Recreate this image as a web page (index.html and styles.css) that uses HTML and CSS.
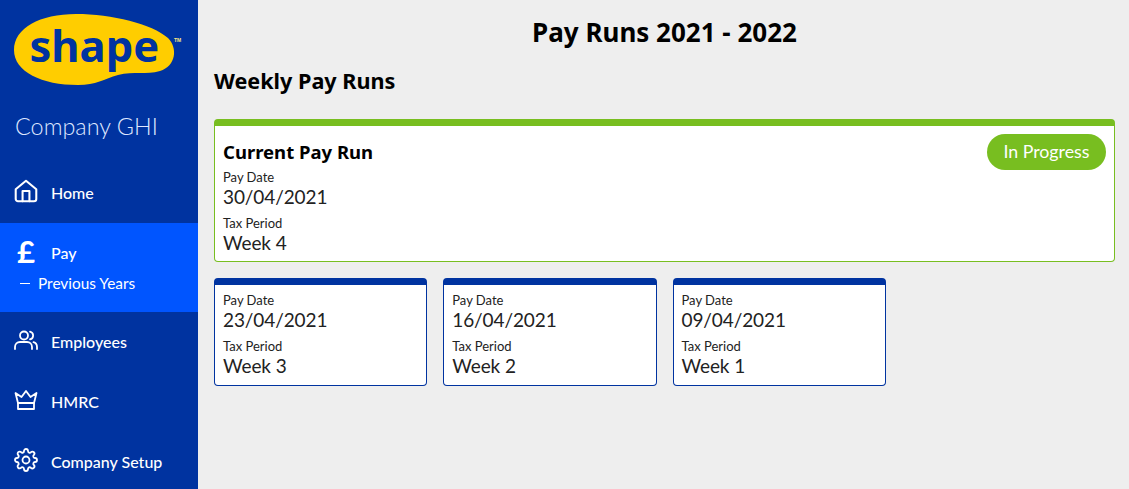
FILE: index.html
```html
<!DOCTYPE html>
<html lang="en">
<head>
<meta charset="utf-8">
<title>Pay Runs</title>
<link rel="stylesheet" href="styles.css">
</head>
<body>
<div class="app">
  <aside class="sidebar">
    <div class="logo">
      <svg class="logo-svg" width="198" height="96" viewBox="0 0 198 96">
        <path class="blob" d="M14 50C14 28 40 14 76 14C112 14 152 24 168 38C178 48 176 66 160 71C146 75 134 71 118 75C104 79 96 85 78 85C42 85 14 72 14 50Z"/>
        <text class="logo-word" x="29.500" y="62">shape</text>
        <text class="logo-tm" x="174" y="42">TM</text>
      </svg>
    </div>
    <div class="company">Company GHI</div>
    <nav class="nav">
      <a class="nav-item">
        <svg class="icon" viewBox="1.500 1.500 21 21"><path d="M3 10.500 12 3l9 7.500V19a2 2 0 0 1-2 2H5a2 2 0 0 1-2-2z"/><path d="M9 21v-9h6v9"/></svg>
        <span>Home</span>
      </a>
      <div class="nav-group">
        <a class="nav-item">
          <span class="icon pound">£</span>
          <span>Pay</span>
        </a>
        <a class="sub-item"><span class="dash"></span>Previous Years</a>
      </div>
      <a class="nav-item">
        <svg class="icon" viewBox="0 0 24 24"><circle cx="10" cy="7.500" r="4"/><path d="M1 21v-2a5 5 0 0 1 5-5h7a5 5 0 0 1 5 5v2"/><path d="M16 3.600a4 4 0 0 1 0 7.800"/><path d="M19.500 14.200a5 5 0 0 1 3.500 4.800v2"/></svg>
        <span>Employees</span>
      </a>
      <a class="nav-item">
        <svg class="icon" viewBox="0 0 24 24"><path d="M4 15 1.500 5l6 4L12 3l4.500 6 6-4L20 15z"/><path d="M4 15h16v6H4z"/></svg>
        <span>HMRC</span>
      </a>
      <a class="nav-item">
        <svg class="icon" viewBox="0 0 24 24"><circle cx="12" cy="12" r="3.500"/><path d="M19.400 15a1.700 1.700 0 0 0 .3 1.800l.1.100a2 2 0 1 1-2.900 2.900l-.1-.1a1.700 1.700 0 0 0-2.800 1.200V21a2 2 0 1 1-4 0v-.1a1.700 1.700 0 0 0-2.900-1.200l-.1.100a2 2 0 1 1-2.800-2.900l.1-.1a1.700 1.700 0 0 0-1.200-2.800H3a2 2 0 1 1 0-4h.1a1.700 1.700 0 0 0 1.200-2.900l-.1-.1a2 2 0 1 1 2.900-2.800l.1.100a1.700 1.700 0 0 0 1.800.3H9a1.700 1.700 0 0 0 1-1.500V3a2 2 0 1 1 4 0v.1a1.700 1.700 0 0 0 2.900 1.200l.1-.1a2 2 0 1 1 2.800 2.900l-.1.100a1.700 1.700 0 0 0-.3 1.800V9a1.700 1.700 0 0 0 1.500 1H21a2 2 0 1 1 0 4h-.1a1.700 1.700 0 0 0-1.500 1z"/></svg>
        <span>Company Setup</span>
      </a>
    </nav>
  </aside>
  <main class="main">
    <h1 class="title">Pay Runs 2021 - 2022</h1>
    <h2 class="section">Weekly Pay Runs</h2>
    <section class="card card-current">
      <div class="current-head">
        <h3 class="card-title">Current Pay Run</h3>
        <span class="badge">In Progress</span>
      </div>
      <div class="label">Pay Date</div>
      <div class="value">30/04/2021</div>
      <div class="label label-gap">Tax Period</div>
      <div class="value">Week 4</div>
    </section>
    <div class="grid">
      <section class="card">
        <div class="label">Pay Date</div>
        <div class="value">23/04/2021</div>
        <div class="label label-gap">Tax Period</div>
        <div class="value">Week 3</div>
      </section>
      <section class="card">
        <div class="label">Pay Date</div>
        <div class="value">16/04/2021</div>
        <div class="label label-gap">Tax Period</div>
        <div class="value">Week 2</div>
      </section>
      <section class="card">
        <div class="label">Pay Date</div>
        <div class="value">09/04/2021</div>
        <div class="label label-gap">Tax Period</div>
        <div class="value">Week 1</div>
      </section>
    </div>
  </main>
</div>
</body>
</html>
```
FILE: styles.css
```css
* { box-sizing: border-box; }
html, body { margin: 0; height: 100%; overflow: hidden; }
body { font-family: "Lato", "Liberation Sans", sans-serif; color: #111; background: #eeeeee; }
.app { display: flex; height: 489px; }
.sidebar { width: 198px; flex: none; background: #0033a0; color: #fff; overflow: hidden; }
.logo { height: 96px; }
.logo-svg { display: block; }
.blob { fill: #ffcd00; }
.logo-word { font-family: "Noto Sans", sans-serif; font-weight: 700; font-size: 43.500px; fill: #0033a0; }
.logo-tm { font-family: "Liberation Sans", sans-serif; font-size: 5px; font-weight: 700; fill: #ffe680; }
.company { font-weight: 300; font-size: 23.400px; line-height: 30px; padding: 15px 0 0 15px; height: 61px; color: #dfe7ff; }
.nav { padding-top: 6px; }
.nav-item { display: flex; align-items: center; height: 60px; padding: 0 0 2px 14px; font-size: 16px; font-weight: 500; color: #fff; gap: 13px; }
.nav-group { background: #0055ff; height: 89px; }
.icon { width: 24px; height: 24px; flex: none; margin-bottom: 2px; fill: none; stroke: #fff; stroke-width: 1.800; stroke-linecap: round; stroke-linejoin: round; }
.pound { font-size: 31px; font-weight: 700; line-height: 24px; text-align: center; color: #fff; }
.sub-item { display: flex; align-items: center; font-size: 15.400px; margin-top: -10px; padding-left: 20px; color: #fff; gap: 8px; line-height: 20px; }
.dash { width: 10px; height: 1px; background: #fff; }
.main { flex: 1; padding: 0 14px 0 16px; min-width: 0; }
.title { margin: 0; padding-top: 14px; font-family: "Noto Sans", sans-serif; font-weight: 700; font-size: 26px; line-height: 36px; text-align: center; color: #000; }
.section { margin: 0; padding-top: 16px; font-family: "Noto Sans", sans-serif; font-weight: 700; font-size: 21.600px; line-height: 30px; color: #000; height: 69px; }
.card { background: #fff; border: 1px solid #0033a0; border-top-width: 7px; border-radius: 4px; padding: 8px 8px 8px 8px; height: 108px; }
.card-current { border-color: #78be20; height: 143px; margin-bottom: 16px; padding-top: 11px; }
.current-head { display: flex; justify-content: space-between; align-items: flex-start; height: 35px; margin-top: -2px; }
.card-title { margin: 5px 0 0; font-family: "Noto Sans", sans-serif; font-weight: 700; font-size: 18.500px; line-height: 24px; color: #000; }
.badge { background: #78be20; color: #fff; border-radius: 18px; font-size: 17.800px; line-height: 34px; height: 36px; padding: 0 16.500px; margin-top: -1px; }
.label { font-size: 13px; line-height: 15px; color: #222; }
.value { font-size: 19px; letter-spacing: -0.1px; line-height: 24px; color: #222; }
.label-gap { margin-top: 7px; }
.grid { display: grid; grid-template-columns: repeat(4, 1fr); gap: 16px; }
```
